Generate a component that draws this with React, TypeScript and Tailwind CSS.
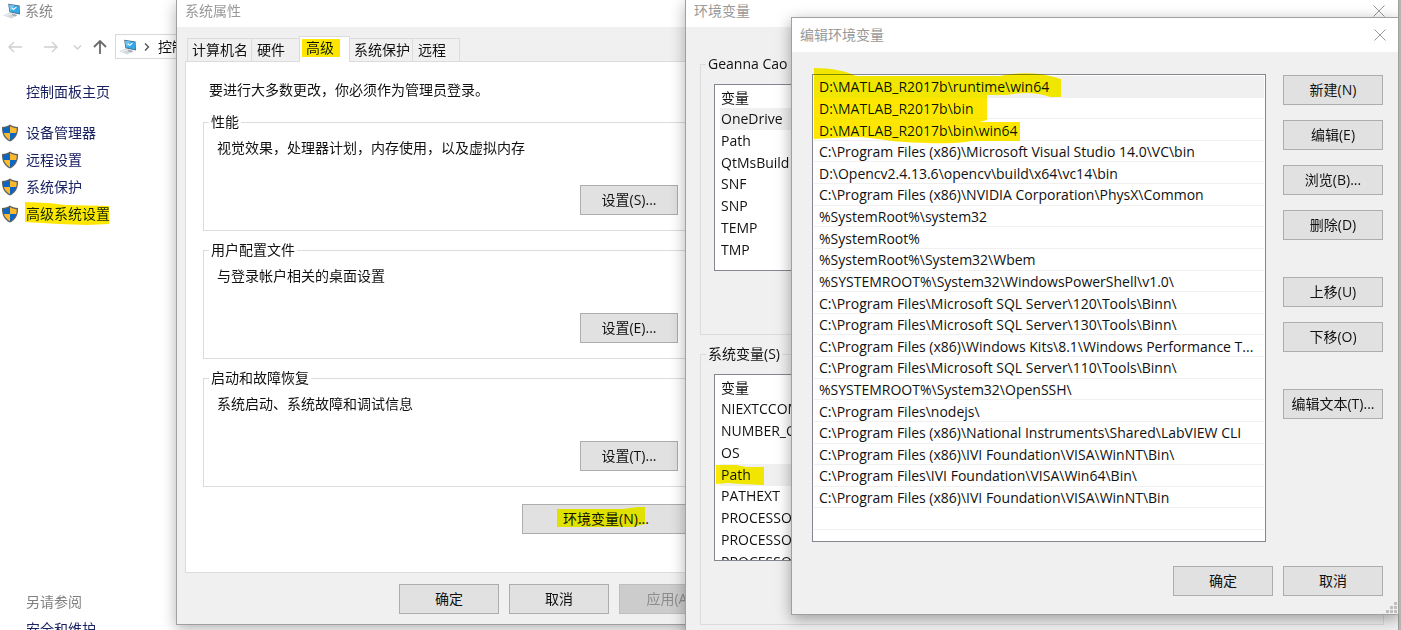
import type { ReactNode } from 'react';
import clsx from 'clsx';

const SIDE_LINKS = ['设备管理器', '远程设置', '系统保护', '高级系统设置'];

const GROUPS = [
  {
    title: '性能',
    text: '视觉效果，处理器计划，内存使用，以及虚拟内存',
    button: '设置(S)...',
  },
  {
    title: '用户配置文件',
    text: '与登录帐户相关的桌面设置',
    button: '设置(E)...',
  },
  {
    title: '启动和故障恢复',
    text: '系统启动、系统故障和调试信息',
    button: '设置(T)...',
  },
];

const USER_VARS = ['OneDrive', 'Path', 'QtMsBuild', 'SNF', 'SNP', 'TEMP', 'TMP'];

const SYSTEM_VARS = [
  'NIEXTCCOMP',
  'NUMBER_OF',
  'OS',
  'Path',
  'PATHEXT',
  'PROCESSOR_A',
  'PROCESSOR_I',
  'PROCESSOR_L',
];

const PATHS = [
  'D:\\MATLAB_R2017b\\runtime\\win64',
  'D:\\MATLAB_R2017b\\bin',
  'D:\\MATLAB_R2017b\\bin\\win64',
  'C:\\Program Files (x86)\\Microsoft Visual Studio 14.0\\VC\\bin',
  'D:\\Opencv2.4.13.6\\opencv\\build\\x64\\vc14\\bin',
  'C:\\Program Files (x86)\\NVIDIA Corporation\\PhysX\\Common',
  '%SystemRoot%\\system32',
  '%SystemRoot%',
  '%SystemRoot%\\System32\\Wbem',
  '%SYSTEMROOT%\\System32\\WindowsPowerShell\\v1.0\\',
  'C:\\Program Files\\Microsoft SQL Server\\120\\Tools\\Binn\\',
  'C:\\Program Files\\Microsoft SQL Server\\130\\Tools\\Binn\\',
  'C:\\Program Files (x86)\\Windows Kits\\8.1\\Windows Performance T...',
  'C:\\Program Files\\Microsoft SQL Server\\110\\Tools\\Binn\\',
  '%SYSTEMROOT%\\System32\\OpenSSH\\',
  'C:\\Program Files\\nodejs\\',
  'C:\\Program Files (x86)\\National Instruments\\Shared\\LabVIEW CLI',
  'C:\\Program Files (x86)\\IVI Foundation\\VISA\\WinNT\\Bin\\',
  'C:\\Program Files\\IVI Foundation\\VISA\\Win64\\Bin\\',
  'C:\\Program Files (x86)\\IVI Foundation\\VISA\\WinNT\\Bin',
  '',
];

function ComputerIcon() {
  return (
    <svg viewBox="0 0 18 16" className="h-4 w-[18px] shrink-0" aria-hidden="true">
      <path d="M0 12.200 6.500 9.800 14 12.200 8.500 15.600z" fill="#d3d9de" />
      <path d="M1 12.300 7 10.600l2 .7-6 2z" fill="#e8ebee" />
      <path d="M9.500 10.500l4.800 1.600-1.600 1.400-4-1.200z" fill="#a4afb8" />
      <path d="M5.200.8 16.600 2.600l.4 9-10.600-2.400z" fill="#4a6a84" />
      <path d="M6 1.700l9.900 1.600.2 7.200-8.900-2z" fill="#35a8e8" />
      <path d="M6 1.700l5.400.9-3.900 6-.3-.1z" fill="#6cc5f5" />
      <path d="M8.800 4.800l1.800 1.700 2.800-2.600" fill="none" stroke="#fff" strokeWidth="1.1" />
    </svg>
  );
}

function ShieldIcon() {
  return (
    <svg viewBox="0 0 18 18" className="size-[18px] shrink-0" aria-hidden="true">
      <path
        d="M9 .4C11 2 13.800 2.900 17 2.900 17.300 9.500 15 14.500 9 17.600 3 14.500.700 9.500 1 2.900 4.200 2.900 7 2 9 .4z"
        fill="#5b6167"
      />
      <path d="M9 1.900C6.900 3.300 4.800 4 2.300 4.200c0 1.800.1 3.300.6 4.800H9z" fill="#0a66c2" />
      <path d="M9 1.900c2.100 1.400 4.200 2.100 6.700 2.300 0 1.800-.1 3.300-.6 4.800H9z" fill="#fdb92c" />
      <path d="M2.900 9C3.800 12 5.800 14.400 9 16.200V9z" fill="#fdb92c" />
      <path d="M15.100 9c-.9 3-2.900 5.400-6.100 7.200V9z" fill="#0a66c2" />
    </svg>
  );
}

function Arrow({ className, d }: { className?: string; d: string }) {
  return (
    <svg
      viewBox="0 0 14 14"
      fill="none"
      stroke="currentColor"
      strokeWidth={1.4}
      className={clsx('size-[14px] shrink-0', className)}
      aria-hidden="true"
    >
      <path d={d} />
    </svg>
  );
}

// Marker stroke, darkens only what is lighter than the ink
function Marker({ d, className }: { d: string; className: string }) {
  return (
    <svg
      className={clsx(
        'pointer-events-none absolute overflow-visible fill-[#ffe600] mix-blend-darken',
        className,
      )}
      aria-hidden="true"
    >
      <path d={d} />
    </svg>
  );
}

function Button({
  children,
  className,
  disabled,
}: {
  children: ReactNode;
  className?: string;
  disabled?: boolean;
}) {
  return (
    <button
      type="button"
      disabled={disabled}
      className={clsx(
        'relative h-[30px] shrink-0 border text-center whitespace-nowrap',
        disabled
          ? 'border-[#bfbfbf] bg-[#cccccc] text-[#8c8c8c]'
          : 'border-[#adadad] bg-[#e1e1e1]',
        className ?? 'w-[100px]',
      )}
    >
      {children}
    </button>
  );
}

function TitleBar({
  title,
  className,
  closable,
}: {
  title: string;
  className: string;
  closable?: boolean;
}) {
  return (
    <header className={clsx('flex items-center justify-between bg-white pl-2', className)}>
      <h2 className="text-[#999999]">{title}</h2>
      {closable && (
        <button type="button" aria-label="关闭" className="text-[#999999]">
          <svg
            viewBox="0 0 12 12"
            className="size-3"
            fill="none"
            stroke="currentColor"
            aria-hidden="true"
          >
            <path d="M.5.5l11 11M11.500.5l-11 11" />
          </svg>
        </button>
      )}
    </header>
  );
}

function SystemWindow() {
  return (
    <main className="w-[176px]">
      <header className="flex h-[22px] items-center gap-1 pl-[3px] text-[#888888]">
        <ComputerIcon />
        <h1>系统</h1>
      </header>
      <nav className="mt-3 flex h-[25px] items-center">
        <button type="button" aria-label="后退" className="ml-2 text-[#cfcfcf]">
          <Arrow d="M14 7H1M6 2 1 7l5 5" />
        </button>
        <button type="button" aria-label="前进" className="ml-[22px] text-[#cfcfcf]">
          <Arrow d="M0 7h13M8 2l5 5-5 5" />
        </button>
        <button type="button" aria-label="最近" className="ml-3 text-[#cfcfcf]">
          <Arrow d="M4 5.500l3.500 3.500L11 5.500" />
        </button>
        <button type="button" aria-label="向上" className="ml-[9px] text-[#6a6a6a]">
          <Arrow d="M7 14V1M1 7l6-6 6 6" className="[stroke-width:1.8]" />
        </button>
        <div className="ml-2 flex h-[25px] min-w-0 flex-1 items-center overflow-hidden border border-r-0 border-[#d9d9d9] pl-[3px]">
          <ComputerIcon />
          <Arrow d="M5 3.500l3.500 3.500L5 10.500" className="ml-[3px] text-[#555555]" />
          <span className="ml-1 shrink-0">控制</span>
        </div>
      </nav>
      <aside className="w-[160px] text-[#1a2160]">
        <a href="#home" className="mt-[23px] block pl-[26px]">
          控制面板主页
        </a>
        <ul className="mt-[17px]">
          {SIDE_LINKS.map((label, i) => (
            <li key={label} className="flex h-[27px] items-center gap-[7px] pl-px">
              <ShieldIcon />
              <a href={`#task-${i}`} className="relative">
                {label}
                {i === 3 && (
                  <Marker
                    className="top-0 -left-px h-5 w-[84px]"
                    d="M0-2 24-1 40 1 84 2V20L62 21 34 20 0 18z"
                  />
                )}
              </a>
            </li>
          ))}
        </ul>
        <p className="mt-[365px] pl-[26px] text-[#808080]">另请参阅</p>
        <a href="#security" className="mt-[7px] block pl-[26px]">
          安全和维护
        </a>
      </aside>
    </main>
  );
}

function Tab({ children, className }: { children: ReactNode; className: string }) {
  return (
    <button
      type="button"
      role="tab"
      aria-selected={false}
      className={clsx(
        'h-[23px] shrink-0 border-t border-r border-[#dcdcdc] bg-[#f0f0f0] text-left whitespace-nowrap',
        className,
      )}
    >
      {children}
    </button>
  );
}

function PropertiesDialog() {
  return (
    <section className="absolute top-0 left-[176px] w-[552px] border-x border-b border-[#a0a0a0] bg-[#f0f0f0] shadow-[0_4px_14px_rgba(0,0,0,0.3)]">
      <TitleBar title="系统属性" className="h-[27px] pb-[5px]" />
      <div className="px-2 pt-[9px] pb-[10px]">
        <div role="tablist" className="flex h-[25px] items-end pl-0.5">
          <Tab className="w-[65px] border-l pl-1">计算机名</Tab>
          <Tab className="w-[47px] border-r-0 pl-[5px]">硬件</Tab>
          <button
            type="button"
            role="tab"
            aria-selected
            className="relative z-10 -mb-px h-[26px] w-[51px] border-x border-t border-[#dcdcdc] bg-white pb-1 pl-[6px] text-left"
          >
            高级
            <Marker className="top-0.5 left-[2px] h-[18px] w-[38px]" d="M0 0H38V18H0z" />
          </button>
          <Tab className="w-[63px] pl-1">系统保护</Tab>
          <Tab className="w-[47px] pl-[5px]">远程</Tab>
        </div>
        <div className="flex flex-col border border-[#dcdcdc] bg-white px-[17px] pt-[18px] pb-[38px]">
          <p className="mb-3 pl-1.5">要进行大多数更改，你必须作为管理员登录。</p>
          <div className="flex flex-col gap-[9px]">
            {GROUPS.map(g => (
              <fieldset
                key={g.title}
                className="flex flex-col border border-[#dcdcdc] pt-[6px] pr-[22px] pb-[15px] pl-[13px]"
              >
                <legend className="-ml-2 px-0.5">{g.title}</legend>
                <p>{g.text}</p>
                <Button className="mt-[27px] w-[98px] self-end">{g.button}</Button>
              </fieldset>
            ))}
          </div>
          <Button className="mt-[17px] mr-[11px] w-[168px] self-end">
            环境变量(N)...
            <Marker
              className="top-1 left-[34px] h-5 w-[88px]"
              d="M0 0H66L80-2H88V15L80 17 74 18H0z"
            />
          </Button>
        </div>
        <div className="mt-[11px] flex justify-end gap-[10px]">
          <Button>确定</Button>
          <Button>取消</Button>
          <Button disabled>应用(A)</Button>
        </div>
      </div>
    </section>
  );
}

function VariableList({
  legend,
  names,
  selected,
  height,
  marked,
}: {
  legend: string;
  names: string[];
  selected: string;
  height: string;
  marked?: boolean;
}) {
  return (
    <fieldset className="border border-[#dcdcdc] px-[13px] pt-[10px] pb-[63px]">
      <legend className="-ml-2 px-0.5">{legend}</legend>
      <div className="h-[187px] overflow-hidden border border-[#828790] bg-white pt-[3px] pl-[5px]">
        <table className={clsx('w-full', height)}>
          <thead>
            <tr>
              <th className="p-0 pl-px text-left font-normal">变量</th>
            </tr>
          </thead>
          <tbody>
            {names.map(name => (
              <tr key={name} className={clsx(name === selected && 'bg-[#f0f0f0]')}>
                <td className="relative p-0 pl-px">
                  <div className="w-[70px] overflow-hidden">{name}</div>
                  {marked && name === selected && (
                    <Marker
                      className="top-0 -left-1 h-5 w-12"
                      d="M0 1 20 1 30 3H48V21L24 20 12 19 0 20z"
                    />
                  )}
                </td>
              </tr>
            ))}
          </tbody>
        </table>
      </div>
    </fieldset>
  );
}

function VariablesDialog() {
  return (
    <section className="absolute top-0 right-0 left-[685px] border-x border-[#a0a0a0] bg-[#f0f0f0] shadow-[0_4px_14px_rgba(0,0,0,0.3)]">
      <TitleBar title="环境变量" className="h-[27px] pr-[13px] pb-[5px]" closable />
      <div className="flex flex-col gap-[9px] px-[14px] pt-[27px] pb-10">
        <VariableList
          legend="Geanna Cao 的用户变量(U)"
          names={USER_VARS}
          selected="OneDrive"
          height="h-[173px]"
        />
        <VariableList
          legend="系统变量(S)"
          names={SYSTEM_VARS}
          selected="Path"
          height="h-[195px]"
          marked
        />
      </div>
    </section>
  );
}

function EditDialog() {
  return (
    <section className="absolute top-[17px] right-0 left-[791px] border border-[#a0a0a0] bg-[#f0f0f0] shadow-[0_4px_14px_rgba(0,0,0,0.35)]">
      <TitleBar title="编辑环境变量" className="h-[34px] pr-3" closable />
      <div className="pt-[22px] pr-[15px] pb-[18px] pl-5">
        <div className="flex gap-[17px]">
          <div className="relative min-w-0 flex-1">
            <ul className="grid h-[468px] grid-rows-[repeat(21,minmax(0,1fr))] border border-[#828790] bg-white px-px pt-px pb-[11px]">
              {PATHS.map((path, i) => (
                <li
                  key={i}
                  className={clsx(
                    'flex items-center border-b border-[#f0f0f0] pt-0.5 pl-[5px] whitespace-nowrap',
                    i === 0 && 'bg-[#f0f0f0]',
                  )}
                >
                  {path}
                </li>
              ))}
            </ul>
            <Marker
              className="top-0 left-0 h-[70px] w-[250px]"
              d="M2-6C20-6 34-3 44 2H188C206-2 228-2 249 5V23H238C226 18 208 18 195 21H175V46L168 48H208V67H160C140 71 100 69 80 67 66 65 54 63 40 63L2 65z"
            />
          </div>
          <div className="flex flex-col gap-[15px] pt-px">
            <Button>新建(N)</Button>
            <Button>编辑(E)</Button>
            <Button>浏览(B)...</Button>
            <Button>删除(D)</Button>
            <Button className="mt-[22px] w-[100px]">上移(U)</Button>
            <Button>下移(O)</Button>
            <Button className="mt-[22px] w-[100px]">编辑文本(T)...</Button>
          </div>
        </div>
        <div className="mt-6 flex justify-end gap-[10px]">
          <Button>确定</Button>
          <Button>取消</Button>
        </div>
      </div>
      <svg
        viewBox="0 0 11 11"
        className="absolute right-px bottom-px size-[11px] fill-[#bfbfbf]"
        aria-hidden="true"
      >
        <path d="M8 0h3v3H8zM8 4h3v3H8zM8 8h3v3H8zM4 4h3v3H4zM4 8h3v3H4zM0 8h3v3H0z" />
      </svg>
    </section>
  );
}

export default function App() {
  return (
    <div className="relative h-screen overflow-hidden border-r-2 border-[#b9b2ae] bg-white font-['Open_Sans','Noto_Sans_CJK_SC',sans-serif] text-[14px] leading-5 text-[#111111]">
      <SystemWindow />
      <PropertiesDialog />
      <VariablesDialog />
      <EditDialog />
    </div>
  );
}
